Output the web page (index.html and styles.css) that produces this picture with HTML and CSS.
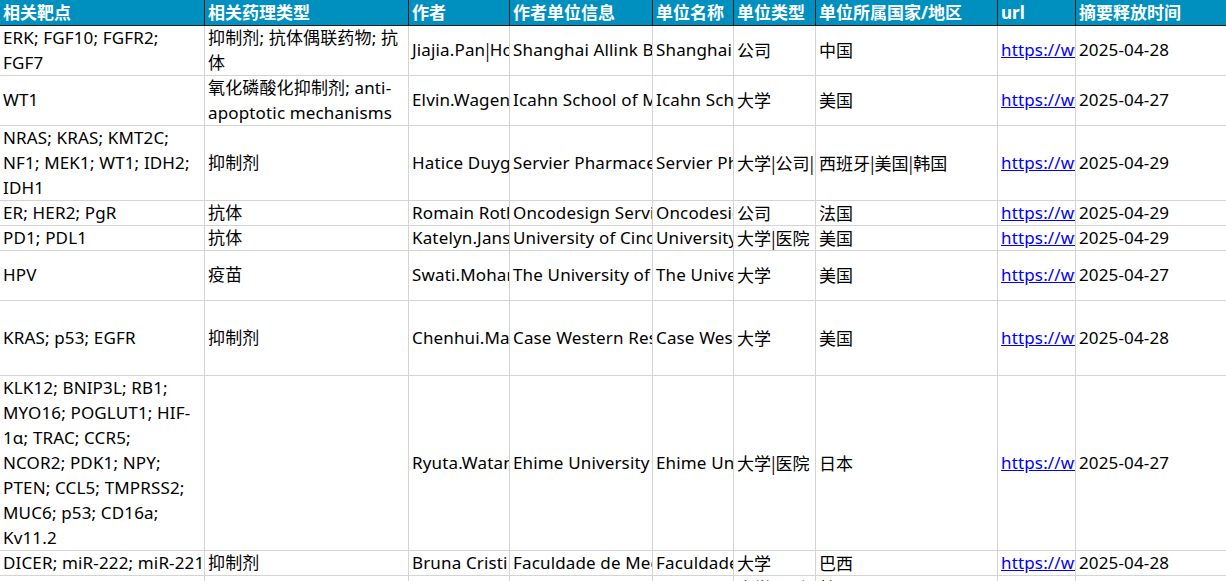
FILE: index.html
```html
<!DOCTYPE html>
<html lang="zh">
<head>
<meta charset="utf-8">
<title>Sheet</title>
<link rel="stylesheet" href="styles.css">
</head>
<body>
<div class="sheet">
  <div class="c h">相关靶点</div>
  <div class="c h">相关药理类型</div>
  <div class="c h">作者</div>
  <div class="c h">作者单位信息</div>
  <div class="c h">单位名称</div>
  <div class="c h">单位类型</div>
  <div class="c h">单位所属国家/地区</div>
  <div class="c h">url</div>
  <div class="c h">摘要释放时间</div>

  <div class="c">ERK; FGF10; FGFR2;<br>FGF7</div>
  <div class="c">抑制剂; 抗体偶联药物; 抗<br>体</div>
  <div class="c">Jiajia.Pan<span class="pipe">|</span>Hong.Liu</div>
  <div class="c">Shanghai Allink Biotherapeutics</div>
  <div class="c">Shanghai Allink</div>
  <div class="c cjk">公司</div>
  <div class="c cjk">中国</div>
  <div class="c"><a href="#">https://www.abstractsonline.com</a></div>
  <div class="c">2025-04-28</div>

  <div class="c">WT1</div>
  <div class="c">氧化磷酸化抑制剂; anti-<br>apoptotic mechanisms</div>
  <div class="c">Elvin.Wagenblast</div>
  <div class="c">Icahn School of Medicine</div>
  <div class="c">Icahn School</div>
  <div class="c cjk">大学</div>
  <div class="c cjk">美国</div>
  <div class="c"><a href="#">https://www.abstractsonline.com</a></div>
  <div class="c">2025-04-27</div>

  <div class="c">NRAS; KRAS; KMT2C;<br>NF1; MEK1; WT1; IDH2;<br>IDH1</div>
  <div class="c">抑制剂</div>
  <div class="c">Hatice Duygu</div>
  <div class="c">Servier Pharmaceuticals</div>
  <div class="c">Servier Pharma</div>
  <div class="c cjk">大学|公司|医院</div>
  <div class="c cjk">西班牙|美国|韩国</div>
  <div class="c"><a href="#">https://www.abstractsonline.com</a></div>
  <div class="c">2025-04-29</div>

  <div class="c">ER; HER2; PgR</div>
  <div class="c">抗体</div>
  <div class="c">Romain Rotheneder</div>
  <div class="c">Oncodesign Services</div>
  <div class="c">Oncodesign</div>
  <div class="c cjk">公司</div>
  <div class="c cjk">法国</div>
  <div class="c"><a href="#">https://www.abstractsonline.com</a></div>
  <div class="c">2025-04-29</div>

  <div class="c">PD1; PDL1</div>
  <div class="c">抗体</div>
  <div class="c">Katelyn.Janssen</div>
  <div class="c">University of Cincinnati</div>
  <div class="c">University of</div>
  <div class="c cjk">大学|医院</div>
  <div class="c cjk">美国</div>
  <div class="c"><a href="#">https://www.abstractsonline.com</a></div>
  <div class="c">2025-04-29</div>

  <div class="c">HPV</div>
  <div class="c">疫苗</div>
  <div class="c">Swati.Mohanty</div>
  <div class="c">The University of Texas</div>
  <div class="c">The University</div>
  <div class="c cjk">大学</div>
  <div class="c cjk">美国</div>
  <div class="c"><a href="#">https://www.abstractsonline.com</a></div>
  <div class="c">2025-04-27</div>

  <div class="c">KRAS; p53; EGFR</div>
  <div class="c">抑制剂</div>
  <div class="c">Chenhui.Ma</div>
  <div class="c">Case Western Reserve University</div>
  <div class="c">Case Western</div>
  <div class="c cjk">大学</div>
  <div class="c cjk">美国</div>
  <div class="c"><a href="#">https://www.abstractsonline.com</a></div>
  <div class="c">2025-04-28</div>

  <div class="c">KLK12; BNIP3L; RB1;<br>MYO16; POGLUT1; HIF-<br>1α; TRAC; CCR5;<br>NCOR2; PDK1; NPY;<br>PTEN; CCL5; TMPRSS2;<br>MUC6; p53; CD16a;<br>Kv11.2</div>
  <div class="c"></div>
  <div class="c">Ryuta.Watanabe</div>
  <div class="c">Ehime University Hospital</div>
  <div class="c">Ehime University</div>
  <div class="c cjk">大学|医院</div>
  <div class="c cjk">日本</div>
  <div class="c"><a href="#">https://www.abstractsonline.com</a></div>
  <div class="c">2025-04-27</div>

  <div class="c">DICER; miR-222; miR-221</div>
  <div class="c">抑制剂</div>
  <div class="c">Bruna Cristina</div>
  <div class="c">Faculdade de Medicina</div>
  <div class="c">Faculdade de</div>
  <div class="c cjk">大学</div>
  <div class="c cjk">巴西</div>
  <div class="c"><a href="#">https://www.abstractsonline.com</a></div>
  <div class="c">2025-04-28</div>

  <div class="c"></div>
  <div class="c"></div>
  <div class="c">Ji.Hoon</div>
  <div class="c">Université de Paris</div>
  <div class="c">Université</div>
  <div class="c cjk">大学|医院</div>
  <div class="c cjk">韩国</div>
  <div class="c"><a href="#">https://www.abstractsonline.com</a></div>
  <div class="c"></div>
</div>
</body>
</html>
```

FILE: styles.css
```css
html, body {
  margin: 0;
  padding: 0;
  background: #ffffff;
  overflow: hidden;
}

.sheet {
  display: grid;
  grid-template-columns: 205px 204px 101px 143px 81px 82px 182px 78px 160px;
  grid-template-rows: 26px 50px 50px 75px 25px 25px 50px 75px 175px 25px 25px;
  font-family: "Noto Sans", "Noto Sans CJK SC", sans-serif;
  font-size: 17px;
  line-height: 25px;
  letter-spacing: 0.15px;
  color: #000000;
}

.c {
  box-sizing: border-box;
  border-right: 1px solid #d4d4d4;
  border-bottom: 1px solid #d4d4d4;
  padding-left: 3px;
  padding-bottom: 2px;
  overflow: hidden;
  white-space: nowrap;
  display: flex;
  align-items: center;
}

.cjk,
.pipe {
  font-family: "Noto Sans CJK SC", "Noto Sans", sans-serif;
  letter-spacing: 0;
}

.h {
  background: #0090bf;
  color: #ffffff;
  font-weight: bold;
  letter-spacing: 0;
  border-right-color: #1c1c1c;
  border-bottom-color: #1c1c1c;
  line-height: 24px;
  padding-bottom: 0;
}

.c a {
  color: #0000ff;
  text-decoration: underline;
}
```
